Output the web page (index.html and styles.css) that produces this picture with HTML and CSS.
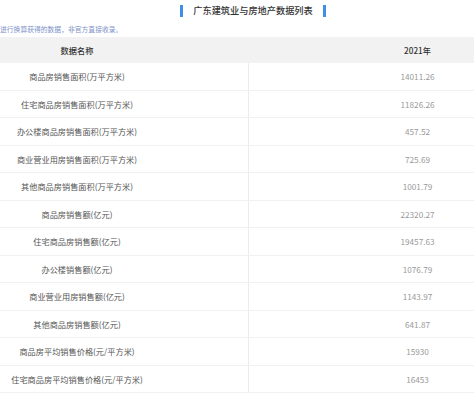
FILE: index.html
```html
<!DOCTYPE html>
<html lang="zh-CN">
<head>
    <meta charset="UTF-8">
    <meta name="viewport" content="width=device-width, initial-scale=1.0">
    <title>广东建筑业与房地产数据列表</title>
    <link rel="stylesheet" href="styles.css">
</head>
<body>

<div class="title">
    <span class="bar"></span>
    <h2>广东建筑业与房地产数据列表</h2>
    <span class="bar"></span>
</div>

<p class="note">进行换算获得的数据，非官方直接收录。</p>

<div class="table-wrap">
    <table>
        <thead>
            <tr>
                <th>数据名称</th>
                <th>2021年</th>
            </tr>
        </thead>
        <tbody>
            <tr><td>商品房销售面积(万平方米)</td><td>14011.26</td></tr>
            <tr><td>住宅商品房销售面积(万平方米)</td><td>11826.26</td></tr>
            <tr><td>办公楼商品房销售面积(万平方米)</td><td>457.52</td></tr>
            <tr><td>商业营业用房销售面积(万平方米)</td><td>725.69</td></tr>
            <tr><td>其他商品房销售面积(万平方米)</td><td>1001.79</td></tr>
            <tr><td>商品房销售额(亿元)</td><td>22320.27</td></tr>
            <tr><td>住宅商品房销售额(亿元)</td><td>19457.63</td></tr>
            <tr><td>办公楼销售额(亿元)</td><td>1076.79</td></tr>
            <tr><td>商业营业用房销售额(亿元)</td><td>1143.97</td></tr>
            <tr><td>其他商品房销售额(亿元)</td><td>641.87</td></tr>
            <tr><td>商品房平均销售价格(元/平方米)</td><td>15930</td></tr>
            <tr><td>住宅商品房平均销售价格(元/平方米)</td><td>16453</td></tr>
        </tbody>
    </table>
</div>

</body>
</html>
```

FILE: styles.css
```css
body {
    margin: 0;
    overflow: hidden; /* таблица шире окна */
    font-family: "Noto Sans CJK SC", "Noto Sans", sans-serif;
    color: #333;
    background: #fff;
}
.title {
    display: flex;
    justify-content: center;
    align-items: center;
    gap: 10px;
    height: 21px;
    padding-left: 32px; /* центр заголовка чуть правее */
}
.title h2 {
    margin: 0;
    font-size: 9.2px;
    font-weight: 500;
    color: #333;
    line-height: 1;
}
.bar {
    width: 3px;
    height: 12px;
    background-color: #3d8fe8;
}
.note {
    margin: 2px 0 2px;
    font-size: 6.8px;
    line-height: 12px;
    color: #7d92c8;
    white-space: nowrap;
}
.table-wrap {
    width: 100%;
}
table {
    width: 680px;
    margin-left: -94px;
    border-collapse: collapse;
    font-size: 8.2px;
}
th, td {
    padding: 0;
    text-align: center;
    border-bottom: 1px solid #f1f1f1;
}
th {
    height: 26px;
    background-color: #f2f2f2;
    font-weight: 500;
    color: #333;
    border-bottom: none;
}
td {
    height: 26.5px;
    color: #555;
}
th:first-child, td:first-child {
    width: 342px;
    border-right: 1px solid #ececec;
}
th:first-child {
    border-right-color: #f2f2f2;
}
td:last-child {
    color: #9a9a9a;
}
```
